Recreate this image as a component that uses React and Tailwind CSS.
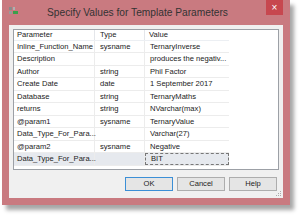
import React from 'react';

const rows = [
  { name: 'Inline_Function_Name', type: 'sysname', value: 'TernaryInverse' },
  { name: 'Description', type: '', value: 'produces the negativ...' },
  { name: 'Author', type: 'string', value: 'Phil Factor' },
  { name: 'Create Date', type: 'date', value: '1 September 2017' },
  { name: 'Database', type: 'string', value: 'TernaryMaths' },
  { name: 'returns', type: 'string', value: 'NVarchar(max)' },
  { name: '@param1', type: 'sysname', value: 'TernaryValue' },
  { name: 'Data_Type_For_Para...', type: '', value: 'Varchar(27)' },
  { name: '@param2', type: 'sysname', value: 'Negative' },
  { name: 'Data_Type_For_Para...', type: '', value: 'BIT', selected: true },
];

const App = () => {
  return (
    <div className="w-[300px] h-[216px] bg-white overflow-hidden" style={{ fontFamily: '"Liberation Sans", Arial, sans-serif' }}>
      <div className="ml-[2px] w-[288px] h-[205px] bg-[#c97a80] flex flex-col shadow-[4px_5px_4px_rgba(0,0,0,0.35)]">
        {/* Title bar */}
        <div className="h-[25px] flex items-start relative">
          <div className="mt-[7px] ml-[7px] w-[10px] h-[9px] flex flex-col gap-[1px]">
            <div className="flex gap-[1px]">
              <div className="w-[3px] h-[3px] bg-[#8a8a8a]" />
              <div className="w-[2px] h-[3px] bg-[#b0b0b0]" />
            </div>
            <div className="flex gap-[1px] items-end">
              <div className="w-[3px] h-[3px] bg-[#9a9a9a]" />
              <div className="w-[5px] h-[3px] bg-[#3aa04a]" />
            </div>
          </div>
          <div className="flex-1 text-center pt-[5px] text-[10.2px] text-[#333] pr-[10px]">
            Specify Values for Template Parameters
          </div>
          <div className="w-[17px] h-[15px] bg-[#c7474f] mr-[7px] flex items-center justify-center text-white text-[10px] leading-none">
            ×
          </div>
        </div>
        {/* Client area */}
        <div className="mx-[7px] h-[173px] bg-[#f0f0f0] px-[4px] pt-[4px] flex flex-col relative">
          <div className="h-[141px] bg-white border border-[#9ca0a6] text-[7.6px] text-[#222]">
            <div className="flex h-[10.5px] leading-[10.5px] border-b border-[#eceff3] w-[215px]">
              <div className="w-[81px] pl-[3px] border-r border-[#e4e6ea]">Parameter</div>
              <div className="w-[50px] pl-[5px] border-r border-[#e4e6ea]">Type</div>
              <div className="flex-1 pl-[4px]">Value</div>
            </div>
            {rows.map((r, i) => (
              <div key={i} className={`flex h-[12.5px] leading-[12px] w-[215px] border-b border-[#ececec] ${r.selected ? 'bg-[#e6e9ee]' : ''}`}>
                <div className="w-[81px] pl-[3px] border-r border-[#ececec] whitespace-nowrap">{r.name}</div>
                <div className="w-[50px] pl-[5px] border-r border-[#ececec]">{r.type}</div>
                <div className={`flex-1 pl-[5px] whitespace-nowrap ${r.selected ? 'border border-dashed border-[#777] leading-[10px]' : ''}`}>{r.value}</div>
              </div>
            ))}
          </div>
          <div className="flex justify-end gap-[4px] mt-[7px] pr-[2px]">
            <div className="w-[48px] h-[14px] border border-[#3c8fd6] bg-[#e5e5e5] text-[7.6px] flex items-center justify-center text-[#222]">OK</div>
            <div className="w-[48px] h-[14px] border border-[#adadad] bg-[#e5e5e5] text-[7.6px] flex items-center justify-center text-[#222]">Cancel</div>
            <div className="w-[48px] h-[14px] border border-[#adadad] bg-[#e5e5e5] text-[7.6px] flex items-center justify-center text-[#222]">Help</div>
          </div>
          <svg className="absolute right-[1px] bottom-[1px]" width="6" height="6" viewBox="0 0 6 6">
            <rect x="4" y="0" width="1" height="1" fill="#aaa" />
            <rect x="2" y="2" width="1" height="1" fill="#aaa" />
            <rect x="4" y="2" width="1" height="1" fill="#aaa" />
            <rect x="0" y="4" width="1" height="1" fill="#aaa" />
            <rect x="2" y="4" width="1" height="1" fill="#aaa" />
            <rect x="4" y="4" width="1" height="1" fill="#aaa" />
          </svg>
        </div>
      </div>
    </div>
  );
};

export default App;
